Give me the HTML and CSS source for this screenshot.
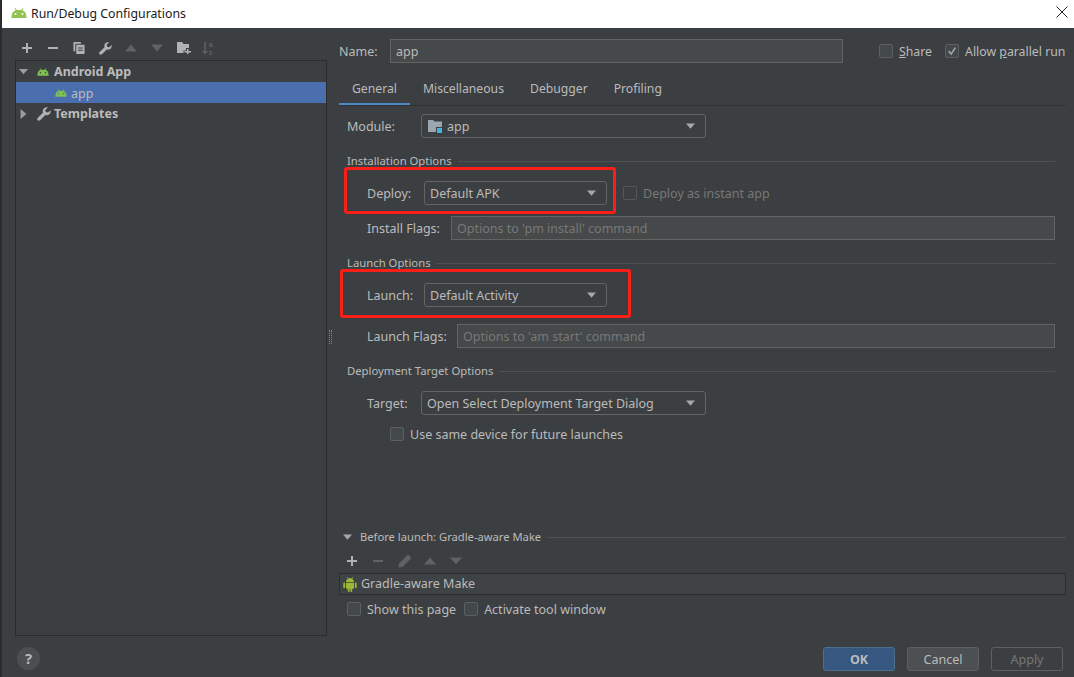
FILE: index.html
```html
<!DOCTYPE html>
<html lang="en">
<head>
    <meta charset="UTF-8">
    <title>Run/Debug Configurations</title>
    <link rel="stylesheet" href="styles.css">
</head>
<body>
    <svg class="sprite" width="0" height="0">
        <symbol id="droid" viewBox="0 0 16 10">
            <path d="M0.5 10 C0.5 5.500 1.800 3 4.800 2.400 L3.500 0.500 L4.200 0 L5.800 2.100 C7.200 1.800 8.800 1.800 10.200 2.100 L11.800 0 L12.500 0.500 L11.200 2.400 C14.200 3 15.500 5.500 15.500 10 Z M3.500 6 a1 1 0 1 0 2 0 a1 1 0 1 0 -2 0 Z M10.500 6 a1 1 0 1 0 2 0 a1 1 0 1 0 -2 0 Z" fill-rule="evenodd"/>
        </symbol>
        <symbol id="plus" viewBox="0 0 12 12"><path d="M5 1h2v4h4v2H7v4H5V7H1V5h4z"/></symbol>
        <symbol id="minus" viewBox="0 0 12 12"><path d="M1 5h10v2H1z"/></symbol>
        <symbol id="up" viewBox="0 0 12 8"><path d="M6 0.5 L12 7.5 H0 Z"/></symbol>
        <symbol id="down" viewBox="0 0 12 8"><path d="M0 0.5 H12 L6 7.5 Z"/></symbol>
        <symbol id="wrench" viewBox="0 0 14 14"><path d="M13.6 3.2 L11 5.6 L8.8 5.1 L8.3 3 L10.8 0.5 C8.6 -0.2 6 1.2 5.8 3.6 C5.7 4.4 5.8 5 6 5.6 L0.7 10.9 C-0.1 11.8 0.1 12.8 0.7 13.3 C1.3 13.9 2.3 14 3.1 13.3 L8.4 8 C9 8.2 9.7 8.3 10.4 8.2 C12.8 7.9 14.2 5.4 13.6 3.2 Z"/></symbol>
    </svg>

    <div class="strip"></div>
    <div class="dialog">
        <div class="titlebar">
            <svg class="title-icon"><use href="#droid"/></svg>
            <span class="title-text">Run/Debug Configurations</span>
            <svg class="close" viewBox="0 0 12 12"><path d="M0.5 0.5 L11.5 11.5 M11.5 0.5 L0.5 11.5"/></svg>
        </div>

        <div class="main">
            <div class="sidebar">
                <div class="toolbar">
                    <svg class="tool"><use href="#plus"/></svg>
                    <svg class="tool"><use href="#minus"/></svg>
                    <svg class="tool" viewBox="0 0 12 13"><path d="M0 0h8v2H2v8H0z M3 3h9v10H3z M5 6v1h5V6z M5 8.5v1h5v-1z" fill-rule="evenodd"/></svg>
                    <svg class="tool tool-wrench"><use href="#wrench"/></svg>
                    <svg class="tool tool-off"><use href="#up"/></svg>
                    <svg class="tool tool-off"><use href="#down"/></svg>
                    <svg class="tool tool-folder" viewBox="0 0 14 12"><path d="M0 0h5l1.500 2H12v4H9v2.500H6.500V11H0z M10 7h1.500v2H14v1.500h-2.500V12H10v-1.500H7.500V9H10z"/></svg>
                    <div class="sort-tool">
                        <svg class="sort-arrow" viewBox="0 0 6 14"><path d="M2.250 1h1.500v9H6L3 13.500L0 10h2.250z"/></svg>
                        <div class="sort-letters"><span>a</span><span>z</span></div>
                    </div>
                </div>
                <div class="tree">
                    <div class="tree-row tree-bold">
                        <svg class="arrow"><use href="#down"/></svg>
                        <svg class="droid"><use href="#droid"/></svg>
                        <span>Android App</span>
                    </div>
                    <div class="tree-row tree-selected">
                        <svg class="droid"><use href="#droid"/></svg>
                        <span>app</span>
                    </div>
                    <div class="tree-row tree-bold">
                        <svg class="arrow arrow-right" viewBox="0 0 8 12"><path d="M0.500 0 L7.500 6 L0.500 12 Z"/></svg>
                        <svg class="tree-wrench"><use href="#wrench"/></svg>
                        <span>Templates</span>
                    </div>
                </div>
            </div>

            <div class="panel">
                <div class="name-row">
                    <label class="name-label">Name:</label>
                    <div class="input name-input">app</div>
                    <span class="check share-check"></span>
                    <span class="check-text"><u>S</u>hare</span>
                    <span class="check parallel-check"><svg viewBox="0 0 14 14"><path d="M3 7 L6 10.500 L11 3"/></svg></span>
                    <span class="check-text">Allow <u>p</u>arallel run</span>
                </div>

                <div class="tabs">
                    <span class="tab tab-active">General</span>
                    <span class="tab">Miscellaneous</span>
                    <span class="tab">Debugger</span>
                    <span class="tab">Profiling</span>
                </div>

                <div class="tab-body">
                    <div class="row module-row">
                        <label class="label-module">Module:</label>
                        <div class="combo combo-wide">
                            <svg class="module-icon" viewBox="0 0 14 14"><path class="folder-part" d="M0 1h5l1.500 1.500H14V8H8v5H0z"/><path class="square-part" d="M9 9h5v5H9z"/></svg>
                            <span class="combo-text">app</span>
                            <svg class="combo-arrow"><use href="#down"/></svg>
                        </div>
                    </div>

                    <div class="section"><span>Installation Options</span><i></i></div>
                    <div class="row field-row deploy-row">
                        <label class="label-deploy">Deploy:</label>
                        <div class="combo combo-narrow">
                            <span class="combo-text">Default APK</span>
                            <svg class="combo-arrow"><use href="#down"/></svg>
                        </div>
                        <span class="check check-off deploy-check"></span>
                        <span class="check-text text-off">Deploy as instant app</span>
                    </div>
                    <div class="row field-row flags-row">
                        <label class="label-install">Install Flags:</label>
                        <div class="input input-hint">Options to 'pm install' command</div>
                    </div>

                    <div class="section"><span>Launch Options</span><i></i></div>
                    <div class="row field-row deploy-row">
                        <label class="label-deploy">Launch:</label>
                        <div class="combo combo-narrow">
                            <span class="combo-text">Default Activity</span>
                            <svg class="combo-arrow"><use href="#down"/></svg>
                        </div>
                    </div>
                    <div class="row field-row launch-flags-row">
                        <label class="label-launch">Launch Flags:</label>
                        <div class="input input-hint">Options to 'am start' command</div>
                    </div>

                    <div class="section"><span>Deployment Target Options</span><i></i></div>
                    <div class="row field-row deploy-row">
                        <label class="label-target">Target:</label>
                        <div class="combo combo-wide">
                            <span class="combo-text">Open Select Deployment Target Dialog</span>
                            <svg class="combo-arrow"><use href="#down"/></svg>
                        </div>
                    </div>
                    <div class="row same-device-row">
                        <span class="check"></span>
                        <span class="check-text">Use same device for future launches</span>
                    </div>
                </div>

                <div class="before-head">
                    <svg class="before-arrow"><use href="#down"/></svg>
                    <span>Before launch: Gradle-aware Make</span>
                    <i></i>
                </div>
                <div class="before-tools">
                    <svg class="small-tool"><use href="#plus"/></svg>
                    <svg class="small-tool tool-off"><use href="#minus"/></svg>
                    <svg class="small-tool pencil" viewBox="0 0 14 14"><path d="M10 0.500 L13.500 4 L4.500 13 L0.500 13.500 L1 9.500 Z"/></svg>
                    <svg class="small-tool tool-off"><use href="#up"/></svg>
                    <svg class="small-tool tool-off"><use href="#down"/></svg>
                </div>
                <div class="before-list">
                    <svg class="robot" viewBox="0 0 14 16"><path d="M3 6 a4 4 0 0 1 1.800 -3.300 L4 1.200 L4.500 0.900 L5.400 2.400 a4 4 0 0 1 3.200 0 L9.500 0.900 L10 1.200 L9.200 2.700 A4 4 0 0 1 11 6 Z M3 6.700 h8 v6 h-1.800 v2.300 a0.900 0.900 0 0 1 -1.800 0 v-2.300 h-0.800 v2.300 a0.900 0.900 0 0 1 -1.800 0 v-2.300 H3 Z M0.300 7.500 a0.900 0.900 0 0 1 1.800 0 v3.700 a0.900 0.900 0 0 1 -1.800 0 Z M11.900 7.500 a0.900 0.900 0 0 1 1.800 0 v3.700 a0.900 0.900 0 0 1 -1.800 0 Z"/></svg>
                    <span>Gradle-aware Make</span>
                </div>
                <div class="before-checks">
                    <span class="check"></span>
                    <span class="check-text">Show this page</span>
                    <span class="check activate-check"></span>
                    <span class="check-text">Activate tool window</span>
                </div>
            </div>
        </div>

        <div class="footer">
            <span class="help">?</span>
            <button class="btn btn-ok">OK</button>
            <button class="btn">Cancel</button>
            <button class="btn btn-off">Apply</button>
        </div>
    </div>

    <div class="grip"></div>
    <!-- red marks drawn over the screenshot -->
    <div class="mark mark-deploy"></div>
    <div class="mark mark-launch"></div>
</body>
</html>
```

FILE: styles.css
```css
* {
    box-sizing: border-box;
}
html, body {
    height: 100%;
}
body {
    margin: 0;
    display: flex;
    overflow: hidden;
    background-color: #3c3f41;
    color: #bbbbbb;
    font-family: "Noto Sans", "Open Sans", sans-serif;
    font-size: 12.5px;
    line-height: 16px;
}
.sprite {
    position: absolute;
}
.strip {
    width: 2px;
    flex: none;
    background-color: #2b2b2b;
}
.dialog {
    flex: 1;
    min-width: 0;
    display: flex;
    flex-direction: column;
}
svg {
    display: block;
    flex: none;
}
label {
    flex: none;
    padding-top: 2px;
}

/* title bar */
.titlebar {
    height: 28px;
    display: flex;
    align-items: center;
    background-color: #fff;
    color: #1a1a1a;
    padding-left: 9px;
}
.title-icon {
    width: 16px;
    height: 10px;
    fill: #92c353;
    margin-right: 4px;
    margin-top: -3px;
}
.title-text {
    font-size: 12.3px;
}
.close {
    width: 12px;
    height: 12px;
    margin-left: auto;
    margin-right: 6px;
    margin-top: -4px;
    stroke: #222;
    stroke-width: 1;
    fill: none;
}

/* left side */
.main {
    height: 612px;
    display: flex;
}
.sidebar {
    width: 329px;
    padding-left: 13px;
    padding-right: 4px;
    display: flex;
    flex-direction: column;
}
.toolbar {
    height: 32px;
    padding: 14px 0 0 6px;
    display: flex;
    align-items: flex-start;
}
.tool {
    width: 12px;
    height: 12px;
    margin-right: 14px;
    fill: #afb1b3;
}
.tool-off {
    fill: #5f6264;
}
.tool-wrench {
    width: 13px;
    height: 13px;
    margin-right: 13px;
}
.tool-folder {
    width: 14px;
    margin-right: 11px;
}
.sort-tool {
    display: flex;
    gap: 1px;
    margin-top: -1px;
}
.sort-arrow {
    width: 6px;
    height: 14px;
    fill: #5f6264;
}
.sort-letters {
    display: flex;
    flex-direction: column;
    color: #5f6264;
    font-family: "Liberation Sans", sans-serif;
    font-size: 6.5px;
    font-weight: 700;
    line-height: 7.5px;
}
.tree {
    height: 576px;
    border: 1px solid #2b2b2b;
}
.tree-row {
    height: 21px;
    display: flex;
    align-items: center;
    padding-left: 3px;
}
.tree-bold {
    font-weight: 700;
}
.arrow {
    width: 9px;
    height: 7px;
    margin-right: 9px;
    fill: #9a9c9e;
}
.arrow-right {
    width: 7px;
    height: 10px;
    margin-left: 1px;
    margin-right: 10px;
}
.droid {
    width: 12px;
    height: 8px;
    margin-right: 5px;
    fill: #7ec04f;
}
.tree-wrench {
    width: 14px;
    height: 14px;
    margin-right: 3px;
    fill: #afb1b3;
}
.tree-selected {
    background-color: #4b6eaf;
    padding-left: 39px;
}
.tree-selected .droid {
    margin-right: 4px;
}
.tree-selected span {
    padding-top: 2px;
}

/* right side */
.panel {
    flex: 1;
    padding: 0 8px;
    min-width: 0;
}
.name-row {
    margin-top: 11px;
    height: 24px;
    display: flex;
    align-items: center;
}
.name-row .check-text {
    flex: none;
    font-size: 12.3px;
}
.name-label {
    width: 51px;
}
.input {
    height: 24px;
    flex: 1;
    line-height: 24px;
    padding-left: 5px;
    background-color: #45494a;
    border: 1px solid #646464;
    white-space: nowrap;
}
.name-input {
    flex: none;
    width: 453px;
}
.input-hint {
    color: #787878;
}
.check {
    width: 14px;
    height: 14px;
    flex: none;
    background-color: #43494a;
    border: 1px solid #5e6060;
    border-radius: 2px;
}
.check-off {
    background-color: #3c3f41;
    border-color: #54575a;
}
.check-text {
    margin-left: 6px;
    padding-top: 2px;
    white-space: nowrap;
}
.text-off {
    color: #777777;
}
.share-check {
    margin-left: 36px;
}
.parallel-check {
    margin-left: 13px;
}
.parallel-check svg {
    width: 12px;
    height: 12px;
    fill: none;
    stroke: #a7a7a7;
    stroke-width: 1.800;
}
.tabs {
    margin-top: 14px;
    height: 29px;
    display: flex;
    border-bottom: 1px solid #323232;
    font-size: 12.2px;
}
.tab {
    height: 28px;
    padding: 0 13px;
    line-height: 23px;
}
.tab-active {
    border-bottom: 2px solid #4a88c7;
}
.tab-body {
    padding: 0 11px 0 8px;
}
.row {
    display: flex;
    align-items: center;
}
.module-row {
    margin-top: 8px;
}
.label-module {
    width: 74px;
}
.combo {
    height: 24px;
    display: flex;
    align-items: center;
    flex: none;
    padding: 0 9px 0 5px;
    border: 1px solid #646464;
    border-radius: 3px;
    background-color: #3c3f41;
}
.combo-text {
    padding-top: 2px;
}
.combo-wide {
    width: 285px;
}
.combo-narrow {
    width: 183px;
}
.combo-arrow {
    width: 11px;
    height: 6px;
    margin-left: auto;
    fill: #a7a7a7;
}
.module-icon {
    width: 14px;
    height: 14px;
    margin-right: 5px;
    margin-left: 1px;
}
.folder-part {
    fill: #9aa7b0;
}
.square-part {
    fill: #40b6e0;
}
.section {
    margin-top: 15px;
    height: 16px;
    display: flex;
    align-items: center;
    font-size: 11.3px;
}
.section i, .before-head i {
    flex: 1;
    height: 1px;
    margin-left: 6px;
    background-color: #515151;
}
.field-row {
    padding-left: 20px;
}
.deploy-row {
    margin-top: 12px;
}
.flags-row {
    margin-top: 11px;
}
.launch-flags-row {
    margin-top: 17px;
}
.label-deploy {
    width: 57px;
}
.label-install {
    width: 84px;
}
.label-launch {
    width: 90px;
}
.label-target {
    width: 54px;
}
.deploy-check {
    margin-left: 16px;
}
.same-device-row {
    margin-top: 10px;
    padding-left: 43px;
}
.before-head {
    margin-top: 86px;
    height: 16px;
    padding-left: 4px;
    display: flex;
    align-items: center;
    font-size: 11.2px;
}
.before-arrow {
    width: 9px;
    height: 6px;
    margin-right: 8px;
    fill: #a7a7a7;
}
.before-tools {
    margin-top: 7px;
    height: 18px;
    padding-left: 7px;
    display: flex;
    align-items: center;
}
.small-tool {
    width: 12px;
    height: 12px;
    margin-right: 14px;
    fill: #afb1b3;
}
.small-tool.tool-off, .small-tool.pencil {
    fill: #5f6264;
}
.small-tool.pencil {
    width: 14px;
    height: 14px;
    margin-right: 12px;
}
.before-list {
    margin-top: 3px;
    height: 22px;
    display: flex;
    align-items: center;
    padding-left: 3px;
    background-color: #3f4345;
    border: 1px solid #2b2b2b;
}
.robot {
    width: 14px;
    height: 16px;
    margin-right: 4px;
    fill: #9ab833;
}
.before-checks {
    margin-top: 5px;
    padding-left: 8px;
    display: flex;
    align-items: center;
}
.activate-check {
    margin-left: 8px;
}

/* footer */
.footer {
    flex: 1;
    display: flex;
    align-items: flex-start;
    gap: 12px;
    padding: 7px 11px 0 15px;
}
.help {
    width: 23px;
    height: 23px;
    margin-right: auto;
    border-radius: 50%;
    background-color: #4b4f51;
    color: #b4b6b8;
    font-size: 15px;
    font-weight: 700;
    line-height: 23px;
    text-align: center;
}
.btn {
    width: 72px;
    height: 24px;
    padding: 0;
    background-color: #4c5052;
    border: 1px solid #5e6060;
    border-radius: 3px;
    color: #bbbbbb;
    font-family: inherit;
    font-size: 12.5px;
}
.btn-ok {
    background-color: #365880;
    border-color: #4c708c;
    font-weight: 700;
}
.btn-off {
    background-color: #3c3f41;
    color: #777777;
}

/* overlays */
.grip {
    position: absolute;
    left: 329px;
    top: 330px;
    width: 3px;
    height: 14px;
    border-left: 1px dotted #808284;
    border-right: 1px dotted #808284;
}
.mark {
    position: absolute;
    border: 3px solid #fb1f18;
    border-radius: 3px;
}
.mark-deploy {
    left: 344px;
    top: 167px;
    width: 272px;
    height: 47px;
}
.mark-launch {
    left: 340px;
    top: 269px;
    width: 291px;
    height: 49px;
}
```
